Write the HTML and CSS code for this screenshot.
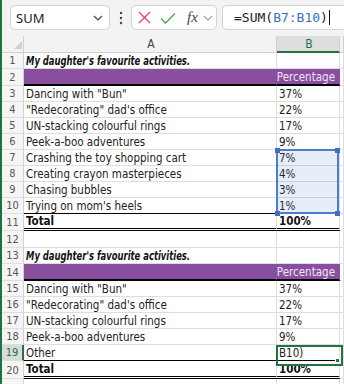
FILE: index.html
```html
<!DOCTYPE html>
<html>
<head>
<meta charset="utf-8">
<link rel="stylesheet" href="styles.css">
</head>
<body>
<div class="app">
  <div class="toolbar">
    <div class="namebox"><span>SUM</span><svg class="chev" width="10" height="6" viewBox="0 0 10 6"><path d="M1 1l4 4 4-4"/></svg></div>
    <div class="dots"><svg width="4" height="14" viewBox="0 0 4 14"><circle cx="2" cy="2" r="1.2"/><circle cx="2" cy="7" r="1.2"/><circle cx="2" cy="12" r="1.2"/></svg></div>
    <div class="fxgroup">
      <svg class="xic" width="13" height="13" viewBox="0 0 13 13"><path d="M1 1L12 12M12 1L1 12"/></svg>
      <svg class="ck" width="16" height="12" viewBox="0 0 16 12"><path d="M1 6.5L5.5 11L15 1.5"/></svg>
      <span class="fx">fx</span>
      <svg class="chev2" width="10" height="6" viewBox="0 0 10 6"><path d="M1 1l4 4 4-4"/></svg>
    </div>
    <div class="formula"><span>=SUM(</span><span class="ref">B7:B10</span><span>)</span><span class="caret"></span></div>
  </div>
  <div class="sheet">
    <div class="row hdr">
      <div class="rh corner"><svg width="8" height="8" viewBox="0 0 8 8"><polygon points="8,0 8,8 0,8"/></svg></div>
      <div class="a ch">A</div>
      <div class="b ch selc">B</div>
      <div class="c ch"></div>
    </div>
    <div class="row"><div class="rh">1</div><div class="a"><span class="ttl">My daughter's favourite activities.</span></div><div class="b"></div><div class="c"></div></div>
    <div class="row r17"><div class="rh">2</div><div class="a p"></div><div class="b p pct">Percentage</div><div class="c"></div></div>
    <div class="row"><div class="rh">3</div><div class="a">Dancing with "Bun"</div><div class="b">37%</div><div class="c"></div></div>
    <div class="row"><div class="rh">4</div><div class="a">"Redecorating" dad's office</div><div class="b">22%</div><div class="c"></div></div>
    <div class="row"><div class="rh">5</div><div class="a">UN-stacking colourful rings</div><div class="b">17%</div><div class="c"></div></div>
    <div class="row"><div class="rh">6</div><div class="a">Peek-a-boo adventures</div><div class="b">9%</div><div class="c"></div></div>
    <div class="row"><div class="rh">7</div><div class="a">Crashing the toy shopping cart</div><div class="b">7%</div><div class="c"></div></div>
    <div class="row"><div class="rh">8</div><div class="a">Creating crayon masterpieces</div><div class="b">4%</div><div class="c"></div></div>
    <div class="row"><div class="rh">9</div><div class="a">Chasing bubbles</div><div class="b">3%</div><div class="c"></div></div>
    <div class="row"><div class="rh">10</div><div class="a blk">Trying on mom's heels</div><div class="b blk">1%</div><div class="c"></div></div>
    <div class="row r17"><div class="rh">11</div><div class="a dbl tot">Total</div><div class="b dbl tot">100%</div><div class="c"></div></div>
    <div class="row r17"><div class="rh">12</div><div class="a"></div><div class="b"></div><div class="c"></div></div>
    <div class="row"><div class="rh">13</div><div class="a"><span class="ttl">My daughter's favourite activities.</span></div><div class="b"></div><div class="c"></div></div>
    <div class="row r17"><div class="rh">14</div><div class="a p"></div><div class="b p pct">Percentage</div><div class="c"></div></div>
    <div class="row"><div class="rh">15</div><div class="a">Dancing with "Bun"</div><div class="b">37%</div><div class="c"></div></div>
    <div class="row"><div class="rh">16</div><div class="a">"Redecorating" dad's office</div><div class="b">22%</div><div class="c"></div></div>
    <div class="row"><div class="rh">17</div><div class="a">UN-stacking colourful rings</div><div class="b">17%</div><div class="c"></div></div>
    <div class="row"><div class="rh">18</div><div class="a">Peek-a-boo adventures</div><div class="b">9%</div><div class="c"></div></div>
    <div class="row"><div class="rh selr">19</div><div class="a blk">Other</div><div class="b blk act">B10)<span class="fh"></span></div><div class="c"></div></div>
    <div class="row r18"><div class="rh">20</div><div class="a dbl tot">Total</div><div class="b dbl tot">100%</div><div class="c"></div></div>
    <div class="row"><div class="rh"></div><div class="a"></div><div class="b"></div><div class="c"></div></div>
    <div class="range"><span class="hd tl"></span><span class="hd tr"></span><span class="hd bl"></span><span class="hd br"></span></div>
  </div>
</div>
</body>
</html>
```
FILE: styles.css
```css
* { box-sizing: border-box; margin: 0; padding: 0; }
html, body { width: 344px; height: 384px; overflow: hidden; background: #fff; }
body { font-family: "DejaVu Sans Condensed", "Liberation Sans Narrow", "Liberation Sans", sans-serif; font-stretch: condensed; }

.app { height: 384px; border-left: 2px solid #1f7244; display: flex; flex-direction: column; overflow: hidden; }

.toolbar { height: 36px; flex: none; background: #f3f3f3; display: flex; align-items: flex-start; padding: 5px 0 0 8px; overflow: hidden; white-space: nowrap; }
.namebox { flex: none; width: 100px; height: 25px; background: #fff; border: 1px solid #d4d4d4; border-radius: 5px; display: flex; align-items: center; justify-content: space-between; padding: 0 6px 0 5px; font: 13px "Noto Sans", sans-serif; color: #222; }
.chev { stroke: #444; stroke-width: 1.2; fill: none; }
.dots { flex: none; width: 21px; height: 25px; display: flex; align-items: center; justify-content: center; }
.dots circle { fill: #444; }
.fxgroup { flex: none; width: 86px; height: 25px; background: #fff; border: 1px solid #d4d4d4; border-radius: 5px; display: flex; align-items: center; padding-left: 6px; }
.xic { stroke: #e0484f; stroke-width: 1.3; fill: none; }
.ck { margin-left: 9px; stroke: #43a552; stroke-width: 1.3; fill: none; }
.fx { margin-left: 11px; font: italic 15px "Liberation Serif", serif; color: #444; }
.chev2 { margin-left: 5px; stroke: #9a9a9a; stroke-width: 1.1; fill: none; }
.formula { flex: none; width: 140px; margin-left: 5px; height: 25px; background: #fff; border: 1px solid #d4d4d4; border-radius: 5px; display: flex; align-items: center; padding-left: 11px; font: 13px "DejaVu Sans Mono", monospace; color: #222; }
.ref { color: #3a6fc4; }
.caret { display: inline-block; width: 1px; height: 15px; background: #111; margin-left: 1px; }

.sheet { position: relative; flex: 1; font-size: 11.5px; color: #222; }
.row { display: flex; height: 16px; }
.r17 { height: 17px; }
.r18 { height: 18px; }
.row > div { border-right: 1px solid #dedede; border-bottom: 1px solid #dedede; display: flex; align-items: flex-end; white-space: nowrap; line-height: 14px; }
.rh { flex: none; width: 22px; justify-content: center; background: #f5f5f5; color: #555; font-size: 11px; border-right-color: #d0d0d0 !important; }
.a { flex: none; width: 253px; padding-left: 2px; }
.b { flex: none; width: 63px; padding-left: 2px; }
.c { flex: 1; }

.hdr { height: 17px; }
.hdr > div { background: #f3f3f3; align-items: center; border-bottom-color: #d0d0d0 !important; border-right-color: #d0d0d0 !important; }
.corner { justify-content: flex-end !important; align-items: flex-end !important; padding: 0 1px 3px 0; }
.corner polygon { fill: #cfcfcf; }
.ch { justify-content: center; color: #444; font-size: 12px; }
.hdr > .selc { background: #dedede; border-bottom: 2px solid #217346 !important; color: #217346; }

.ttl { display: inline-block; font-size: 12px; font-weight: bold; font-style: italic; color: #111; transform: scaleX(0.78); transform-origin: left center; }
.row > .p { background: #8a4e9f; border-right-color: #8a4e9f; border-bottom: 2px solid #000; }
.pct { justify-content: flex-end; padding-right: 4px; color: #efe6f4; }
.row > .blk { border-bottom-color: #000; }
.row > .dbl { border-bottom: 3px double #000; }
.tot { font-weight: bold; color: #111; }

.row > .selr { background: #dadada; border-right: 2px solid #217346 !important; color: #217346; }
.act { position: relative; }
.act::after { content: ""; position: absolute; left: -1px; top: 0; width: 63px; height: 17px; border: 2px solid #217346; }
.fh { position: absolute; left: 58px; top: 13px; width: 5px; height: 5px; background: #217346; border: 1px solid #fff; z-index: 1; }

.range { position: absolute; left: 274px; top: 113px; width: 63px; height: 65px; border: 2px solid #4a7cd0; background: rgba(68, 114, 196, 0.12); }
.hd { position: absolute; width: 5px; height: 5px; background: #3d6fc6; }
.tl { left: -3px; top: -3px; }
.tr { left: 57px; top: -3px; }
.bl { left: -3px; top: 60px; }
.br { left: 57px; top: 60px; }
```
